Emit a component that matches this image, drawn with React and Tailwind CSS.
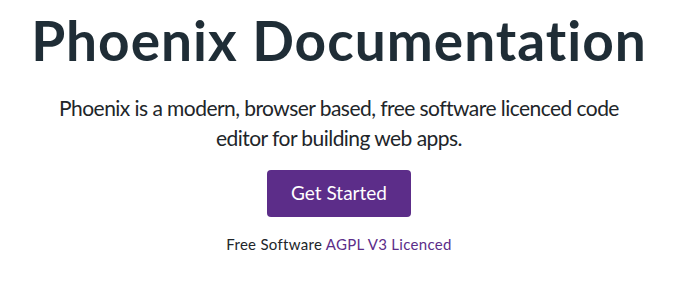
export default function App() {
  return (
    <div className="w-[693px] h-[285px] bg-white">
      <div className="w-[678px] flex flex-col items-center font-['Lato',sans-serif] text-[#1f2d36] [font-variant-ligatures:none]">
        <h1 className="mt-[7px] text-[55px] leading-[66px] font-bold tracking-[1px]">Phoenix Documentation</h1>
        <p className="mt-[20px] text-[21px] leading-[30px] tracking-[-0.55px] text-center text-[#212529] w-[600px]">
          Phoenix is a modern, browser based, free software licenced code editor for building web apps.
        </p>
        <button className="mt-[17px] w-[144px] h-[47px] rounded-[4px] bg-[#5c2d89] text-white text-[19px]">Get Started</button>
        <p className="mt-[17px] text-[15px] leading-[20px] tracking-[0.3px] text-[#212529]">
          Free Software <span className="text-[#5c2d89]">AGPL V3 Licenced</span>
        </p>
      </div>
    </div>
  );
}
